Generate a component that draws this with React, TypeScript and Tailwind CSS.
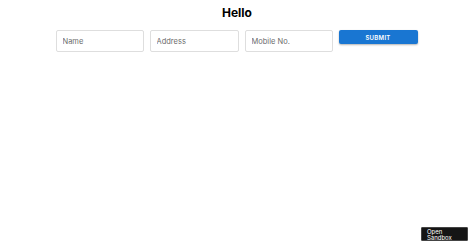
import React from "react";

export default function App() {
  return (
    <div className="relative w-[474px] h-[248px] bg-white" style={{ fontFamily: "Inter, 'Liberation Sans', sans-serif" }}>
      <h1 className="pt-[6px] text-center text-[12px] leading-[14px] font-bold text-black">Hello</h1>
      <div className="mt-[10px] flex justify-center items-start gap-[6px] pr-[1px]">
        <input placeholder="Name" className="w-[88px] h-[22px] rounded-[2px] border border-[#dedede] px-[6px] text-[7.5px] text-black placeholder:text-[#6b6b6b] outline-none" />
        <input placeholder="Address" className="w-[89px] h-[22px] rounded-[2px] border border-[#dedede] px-[6px] text-[7.5px] text-black placeholder:text-[#6b6b6b] outline-none" />
        <input placeholder="Mobile No." className="w-[88px] h-[22px] rounded-[2px] border border-[#dedede] px-[6px] text-[7.5px] text-black placeholder:text-[#6b6b6b] outline-none" />
        <button className="w-[79px] h-[14px] rounded-[2px] bg-[#1976d2] text-white text-[6px] font-semibold tracking-[0.3px] shadow-[0_1px_2px_rgba(0,0,0,0.3)]">SUBMIT</button>
      </div>
      <div className="absolute left-[421px] top-[227px] w-[47px] h-[14px] rounded-[1px] bg-[#151515] border border-[#444] pl-[5px] text-white text-[6px] leading-[6px] pt-[1px]">
        Open<br />Sandbox
      </div>
    </div>
  );
}
